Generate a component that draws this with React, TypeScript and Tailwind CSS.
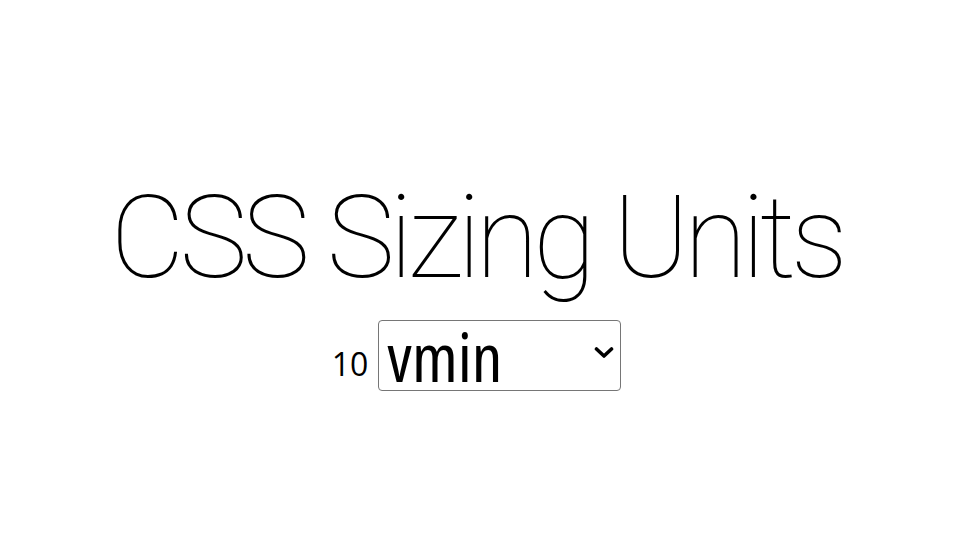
import { useState } from 'react'

export default function App() {
  const [unit, setUnit] = useState('vmin')

  return (
    <div className="flex h-[550px] w-full flex-col items-center justify-center bg-white pr-6 pt-[21px] text-black">
      <h1 className="font-['Roboto'] text-[115px] font-thin leading-none tracking-[-5.4px]">CSS Sizing Units</h1>
      <div className="mt-[25px] flex items-end gap-[10px]">
        <span className="mb-[11px] font-['Open_Sans'] text-[32px] leading-none font-stretch-[94%]">10</span>
        <div className="relative">
          <select
            value={unit}
            onChange={(e) => setUnit(e.target.value)}
            className="block h-[71px] w-[243px] appearance-none rounded-[4px] border border-[#767676] bg-white pl-2 pr-10 font-['Open_Sans'] text-[68px] leading-none font-stretch-condensed outline-none"
          >
            <option value="vmin">vmin</option>
            <option value="vmax">vmax</option>
            <option value="vw">vw</option>
            <option value="vh">vh</option>
          </select>
          <svg className="pointer-events-none absolute right-[7px] top-[27px]" width="20" height="11" viewBox="0 0 20 11" fill="none">
            <path d="M2.5 2 L10 9 L17.5 2" stroke="black" strokeWidth="3.6" strokeLinecap="round" strokeLinejoin="round" />
          </svg>
        </div>
      </div>
    </div>
  )
}
